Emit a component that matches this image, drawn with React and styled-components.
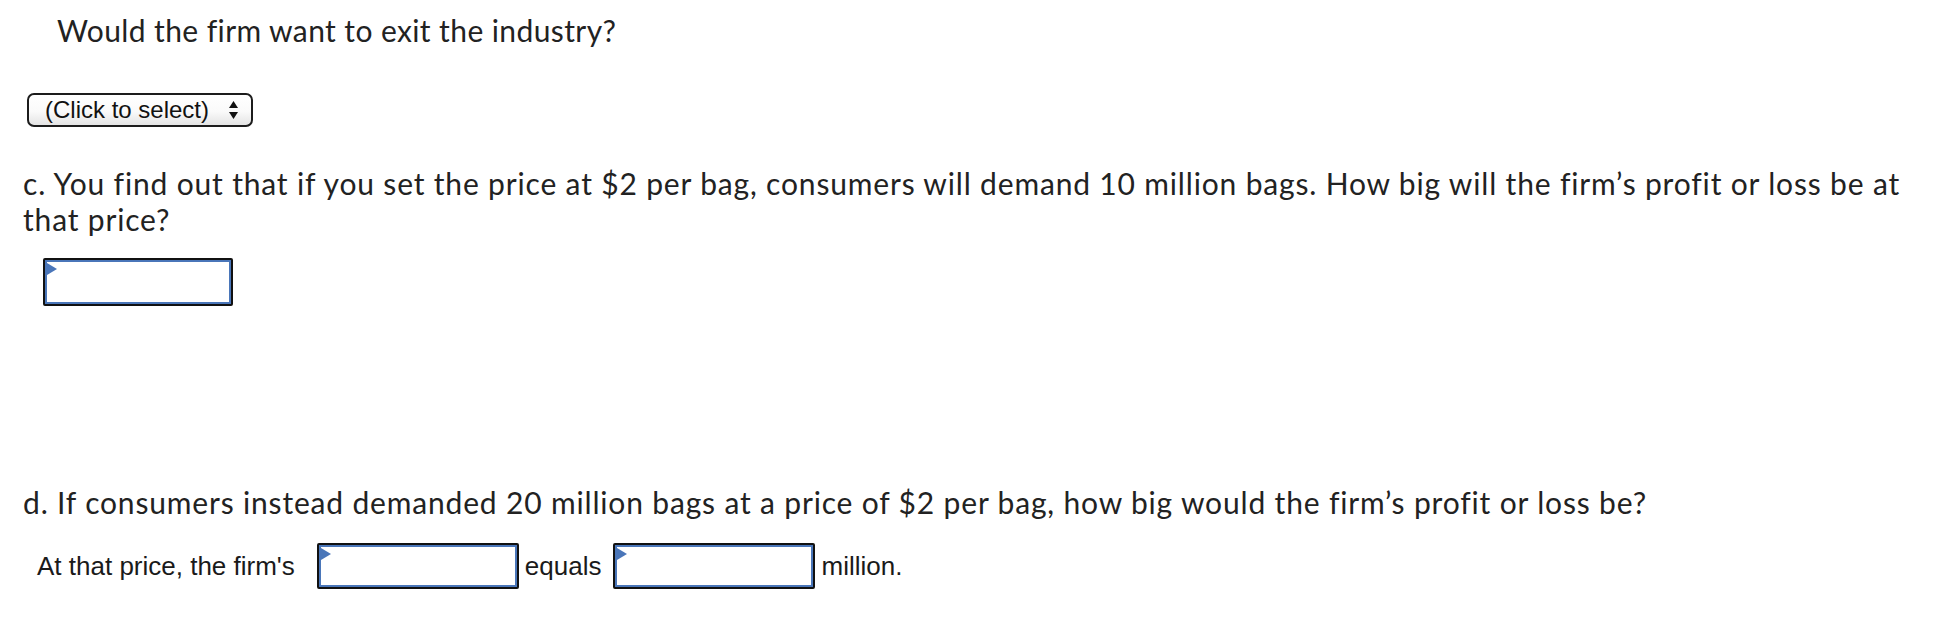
import React from 'react';
import styled, { createGlobalStyle } from 'styled-components';

const GlobalStyle = createGlobalStyle`
  body {
    margin: 0;
    background: #ffffff;
  }
`;

const Page = styled.div`
  width: 1940px;
  height: 628px;
  box-sizing: border-box;
  padding: 0 30px 0 23px;
  font-family: Lato, "Open Sans", sans-serif;
  font-variant-ligatures: none;
  color: #222222;
  overflow: hidden;
`;

const Prompt = styled.p`
  margin: ${(p) => p.$top}px 0 0 ${(p) => p.$indent || 0}px;
  font-size: 30px;
  line-height: 36px;
  letter-spacing: ${(p) => p.$spacing ?? 0.83}px;
`;

const SelectBox = styled.div`
  display: inline-flex;
  align-items: center;
  justify-content: space-between;
  box-sizing: border-box;
  width: 226px;
  height: 34px;
  margin: 45px 0 0 4px;
  padding: 0 12px 0 16px;
  border: 2px solid #1c1c1c;
  border-radius: 7px;
  background: linear-gradient(#ffffff 0%, #fafafa 55%, #e4e4e4 100%);
  font-family: "Liberation Sans", Arial, sans-serif;
  font-size: 24px;
  color: #111111;
  cursor: default;
`;

const Arrows = styled.svg`
  width: 11px;
  height: 20px;
`;

const AnswerBox = styled.span`
  position: relative;
  display: inline-block;
  box-sizing: border-box;
  width: ${(p) => p.$width}px;
  height: ${(p) => p.$height}px;
  border: 2px solid #111111;
  border-radius: 2px;
  box-shadow: inset 0 0 0 2px #4a76b9;
  background: #ffffff;

  &::before {
    content: "";
    position: absolute;
    top: 3px;
    left: 2px;
    border-top: 6px solid transparent;
    border-bottom: 6px solid transparent;
    border-left: 10px solid #4a76b9;
  }
`;

const BlockAnswer = styled.div`
  margin: 21px 0 0 20px;
  line-height: 0;
`;

const Row = styled.div`
  display: flex;
  align-items: center;
  margin: 23px 0 0 14px;
  font-family: "Liberation Sans", Arial, sans-serif;
  font-size: 26px;
  color: #1a1a1a;
`;

const RowText = styled.span`
  margin-right: ${(p) => p.$gap || 0}px;
  margin-left: ${(p) => p.$lead || 0}px;
`;

export default function App() {
  return (
    <>
      <GlobalStyle />
      <Page>
        <Prompt $top={12} $indent={34} $spacing={0.4}>Would the firm want to exit the industry?</Prompt>
        <SelectBox role="button">
          <span>(Click to select)</span>
          <Arrows viewBox="0 0 11 20">
            <path d="M5.5 1 L10 8 L1 8 Z" fill="#111" />
            <path d="M5.5 19 L10 12 L1 12 Z" fill="#111" />
          </Arrows>
        </SelectBox>
        <Prompt $top={38}>
          c. You find out that if you set the price at $2 per bag, consumers will demand 10 million bags. How big will the firm’s profit or loss be at that price?
        </Prompt>
        <BlockAnswer>
          <AnswerBox $width={190} $height={48} />
        </BlockAnswer>
        <Prompt $top={178}>
          d. If consumers instead demanded 20 million bags at a price of $2 per bag, how big would the firm’s profit or loss be?
        </Prompt>
        <Row>
          <RowText $gap={22}>At that price, the firm's</RowText>
          <AnswerBox $width={202} $height={46} />
          <RowText $lead={6} $gap={12}>equals</RowText>
          <AnswerBox $width={202} $height={46} />
          <RowText $lead={6}>million.</RowText>
        </Row>
      </Page>
    </>
  );
}
